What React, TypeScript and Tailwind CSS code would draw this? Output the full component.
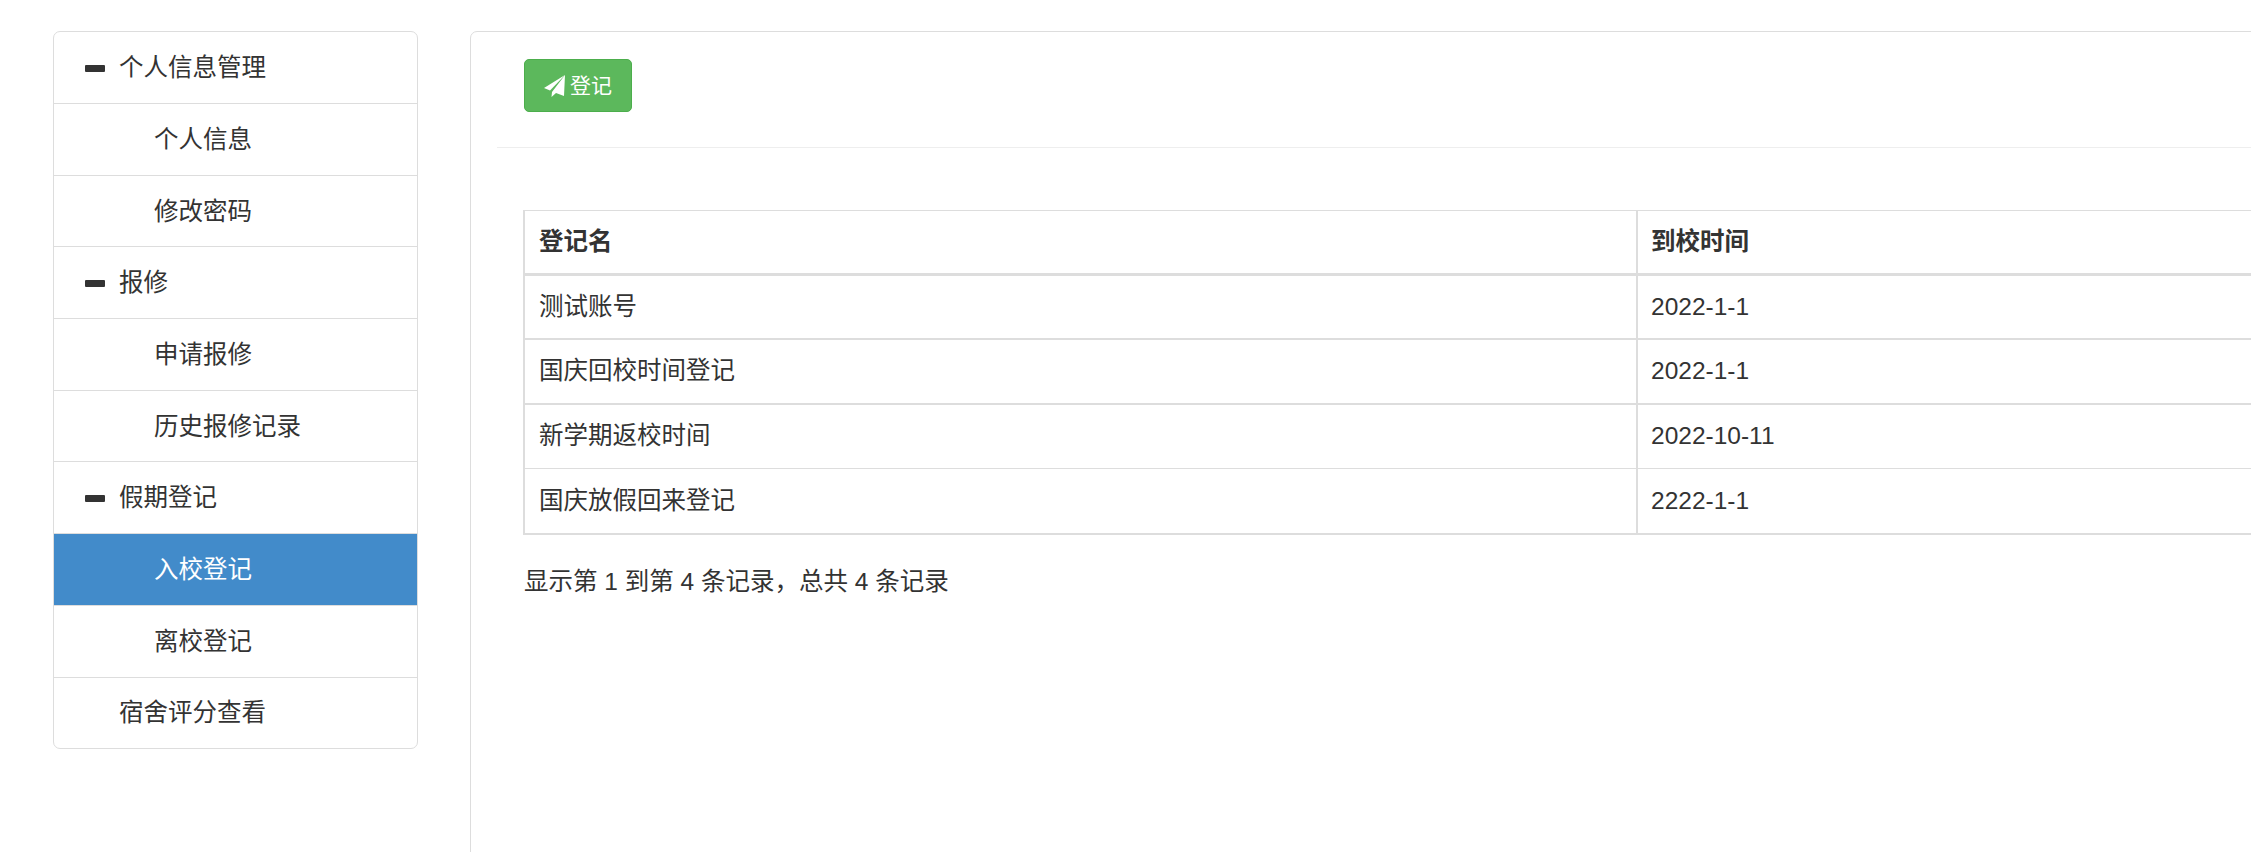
const menu = [
  { label: "个人信息管理", group: true },
  { label: "个人信息" },
  { label: "修改密码" },
  { label: "报修", group: true },
  { label: "申请报修" },
  { label: "历史报修记录" },
  { label: "假期登记", group: true },
  { label: "入校登记", active: true },
  { label: "离校登记" },
  { label: "宿舍评分查看", plain: true },
];

const rows = [
  { name: "测试账号", date: "2022-1-1", border: "border-b-2" },
  { name: "国庆回校时间登记", date: "2022-1-1", border: "border-b-2" },
  { name: "新学期返校时间", date: "2022-10-11", border: "border-b" },
  { name: "国庆放假回来登记", date: "2222-1-1", border: "border-b-2" },
];

const App = () => {
  return (
    <div className="h-[852px] w-[2251px] overflow-hidden bg-white font-['Liberation_Sans','Noto_Sans_CJK_SC',sans-serif] text-[24.5px] text-[#333] flex items-start pt-[31px] pl-[53px]">
      {/* Sidebar */}
      <ul className="w-[365px] shrink-0 rounded-[7px] border border-[#ddd] overflow-hidden">
        {menu.map((item, i) => (
          <li
            key={item.label}
            className={`flex h-[71.7px] first:h-[71px] items-center pt-[2px] ${i > 0 ? "border-t border-[#ddd]" : ""} ${
              item.active ? "bg-[#428bca] text-white" : ""
            } ${item.group || item.plain ? "pl-[31px]" : "pl-[100px]"}`}
          >
            {item.group ? (
              <span className="mr-[14px] h-[7px] w-[20px] rounded-[1px] bg-[#333]" />
            ) : item.plain ? (
              <span className="w-[34px]" />
            ) : null}
            {item.label}
          </li>
        ))}
      </ul>

      {/* Main panel */}
      <div className="ml-[52px] h-[900px] w-[1900px] shrink-0 rounded-[7px] border border-[#ddd] pl-[26px] pt-[27px]">
        <div className="border-b border-[#eee] pl-[27px] pb-[35px]">
          <button className="flex h-[53px] w-[108px] items-center justify-center gap-[5px] rounded-[5px] border border-[#4cae4c] bg-[#5cb85c] text-[21px] text-white">
            <svg width="21" height="22" viewBox="0 0 21 22" fill="white">
              <path d="M21 0 L0 13 L6 15.5 Z" />
              <path d="M21 0 L8 17 L7.5 22 L12 18 L20 21 Z" />
            </svg>
            登记
          </button>
        </div>

        <table className="mt-[62px] ml-[26px] w-[2000px] table-fixed border-collapse">
          <thead>
            <tr className="h-[64px] border-b-[3px] border-t border-[#ddd] text-left">
              <th className="w-[1113px] border-l-2 border-r-2 border-[#ddd] pl-[14px] font-bold">登记名</th>
              <th className="pl-[13px] font-bold">到校时间</th>
            </tr>
          </thead>
          <tbody>
            {rows.map((row) => (
              <tr key={row.name} className={`h-[64.75px] ${row.border} border-[#ddd]`}>
                <td className="border-l-2 border-r-2 border-[#ddd] pl-[14px]">{row.name}</td>
                <td className="pl-[13px]">{row.date}</td>
              </tr>
            ))}
          </tbody>
        </table>

        <p className="ml-[27px] mt-[29px] leading-[35px]">显示第 1 到第 4 条记录，总共 4 条记录</p>
      </div>
    </div>
  );
};

export default App;
